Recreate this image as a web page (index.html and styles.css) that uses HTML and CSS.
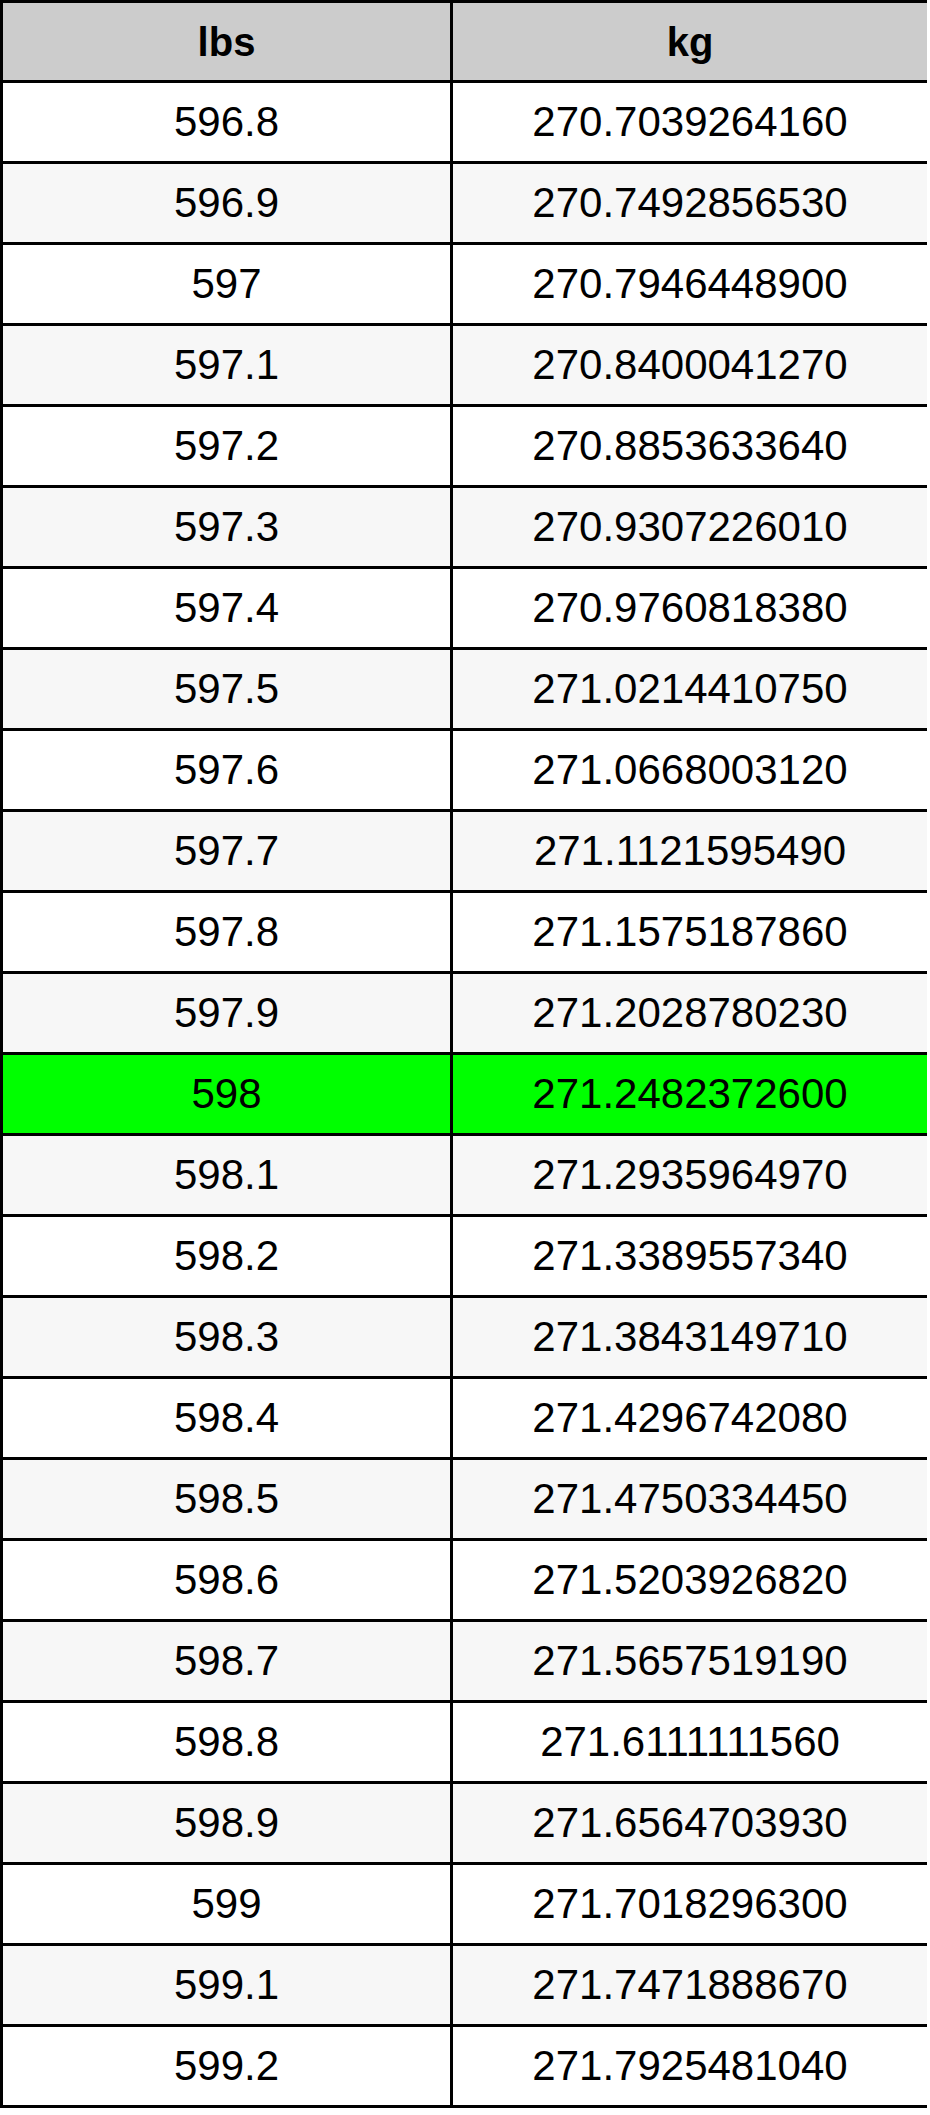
FILE: index.html
```html
<!DOCTYPE html>
<html>
<head>
<meta charset="utf-8">
<link rel="stylesheet" href="styles.css">
</head>
<body>
<div class="table">
  <div class="cell head"><span>lbs</span></div>
  <div class="cell head"><span>kg</span></div>
  <div class="cell"><span>596.8</span></div><div class="cell"><span>270.7039264160</span></div>
  <div class="cell alt"><span>596.9</span></div><div class="cell alt"><span>270.7492856530</span></div>
  <div class="cell"><span>597</span></div><div class="cell"><span>270.7946448900</span></div>
  <div class="cell alt"><span>597.1</span></div><div class="cell alt"><span>270.8400041270</span></div>
  <div class="cell"><span>597.2</span></div><div class="cell"><span>270.8853633640</span></div>
  <div class="cell alt"><span>597.3</span></div><div class="cell alt"><span>270.9307226010</span></div>
  <div class="cell"><span>597.4</span></div><div class="cell"><span>270.9760818380</span></div>
  <div class="cell alt"><span>597.5</span></div><div class="cell alt"><span>271.0214410750</span></div>
  <div class="cell"><span>597.6</span></div><div class="cell"><span>271.0668003120</span></div>
  <div class="cell alt"><span>597.7</span></div><div class="cell alt"><span>271.1121595490</span></div>
  <div class="cell"><span>597.8</span></div><div class="cell"><span>271.1575187860</span></div>
  <div class="cell alt"><span>597.9</span></div><div class="cell alt"><span>271.2028780230</span></div>
  <div class="cell hl"><span>598</span></div><div class="cell hl"><span>271.2482372600</span></div>
  <div class="cell alt"><span>598.1</span></div><div class="cell alt"><span>271.2935964970</span></div>
  <div class="cell"><span>598.2</span></div><div class="cell"><span>271.3389557340</span></div>
  <div class="cell alt"><span>598.3</span></div><div class="cell alt"><span>271.3843149710</span></div>
  <div class="cell"><span>598.4</span></div><div class="cell"><span>271.4296742080</span></div>
  <div class="cell alt"><span>598.5</span></div><div class="cell alt"><span>271.4750334450</span></div>
  <div class="cell"><span>598.6</span></div><div class="cell"><span>271.5203926820</span></div>
  <div class="cell alt"><span>598.7</span></div><div class="cell alt"><span>271.5657519190</span></div>
  <div class="cell"><span>598.8</span></div><div class="cell"><span>271.6111111560</span></div>
  <div class="cell alt"><span>598.9</span></div><div class="cell alt"><span>271.6564703930</span></div>
  <div class="cell"><span>599</span></div><div class="cell"><span>271.7018296300</span></div>
  <div class="cell alt"><span>599.1</span></div><div class="cell alt"><span>271.7471888670</span></div>
  <div class="cell"><span>599.2</span></div><div class="cell"><span>271.7925481040</span></div>
</div>
</body>
</html>
```

FILE: styles.css
```css
html, body {
  margin: 0;
  padding: 0;
  background: #ffffff;
}

.table {
  display: grid;
  grid-template-columns: 447px 474px;
  grid-template-rows: 77px;
  grid-auto-rows: 78px;
  gap: 3px;
  padding: 3px;
  width: 921px;
  background: #000000;
  font-family: "Liberation Sans", Arial, sans-serif;
  color: #000000;
}

.cell {
  display: flex;
  align-items: center;
  justify-content: center;
  background: #ffffff;
  font-size: 42px;
  line-height: 48px;
}

.cell.alt {
  background: #f7f7f7;
}

.cell.hl {
  background: #00ff00;
}

.cell.head {
  background: #cccccc;
  font-weight: bold;
  font-size: 40px;
  line-height: 46px;
}
```
